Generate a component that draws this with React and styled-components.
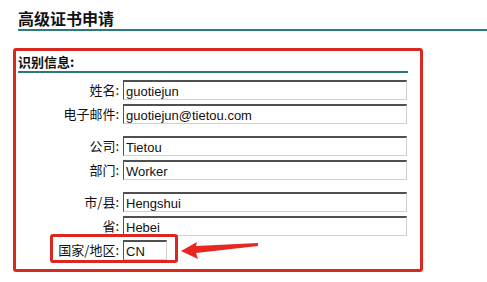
import React from "react";
import styled, { createGlobalStyle } from "styled-components";

const GlobalStyle = createGlobalStyle`
  body {
    margin: 0;
    background: #fff;
    font-family: "Noto Sans CJK SC", "Liberation Sans", sans-serif;
    color: #111;
  }
`;

const Page = styled.div`
  width: 487px;
  height: 282px;
  overflow: hidden;
  padding: 7px 0 0 18px;
  box-sizing: border-box;
`;

const Title = styled.h1`
  margin: 0;
  font-size: 16px;
  line-height: 22px;
  font-weight: 700;
  border-bottom: 2px solid #2b7b7a;
`;

const Panel = styled.div`
  margin: 17px 0 0 -5px;
  width: 410px;
  box-sizing: border-box;
  border: 3px solid #d8281f;
  border-radius: 3px;
  padding: 2px 12px 9px 2px;
`;

const SectionTitle = styled.h2`
  margin: 0 0 7px;
  font-size: 13px;
  line-height: 18px;
  font-weight: 700;
  border-bottom: 2px solid #2b7b7a;
`;

const Fields = styled.div`
  display: grid;
  grid-template-columns: 101px 284px;
  column-gap: 4px;
  row-gap: 4px;
`;

const Row = styled.div`
  display: contents;
`;

const Label = styled.label`
  grid-column: 1;
  text-align: right;
  font-size: 13px;
  line-height: 20px;
  height: 20px;
  margin-top: ${(p) => (p.$spaced ? "8px" : "0")};
`;

const Cell = styled.div`
  grid-column: 2;
  position: relative;
  height: 20px;
  margin-top: ${(p) => (p.$spaced ? "8px" : "0")};
`;

const Input = styled.input`
  display: block;
  width: ${(p) => p.$w || "284px"};
  height: 20px;
  box-sizing: border-box;
  margin: 0;
  padding: 1px 0 0 2px;
  font-family: "Liberation Sans", Arial, sans-serif;
  font-size: 13px;
  color: #111;
  background: #fff;
  border-top: 2px solid #505050;
  border-left: 1px solid #505050;
  border-right: 1px solid #cfcfcf;
  border-bottom: 1px solid #cfcfcf;
  outline: none;
`;

const Highlight = styled.div`
  position: absolute;
  left: -73px;
  top: -6px;
  width: 128px;
  height: 29px;
  box-sizing: border-box;
  border: 3px solid #d8281f;
  border-radius: 3px;
  pointer-events: none;
`;

const Arrow = styled.svg`
  position: absolute;
  left: 57px;
  top: 0;
  width: 80px;
  height: 20px;
`;

const rows = [
  { label: "姓名:", value: "guotiejun" },
  { label: "电子邮件:", value: "guotiejun@tietou.com" },
  { label: "公司:", value: "Tietou", spaced: true },
  { label: "部门:", value: "Worker" },
  { label: "市/县:", value: "Hengshui", spaced: true },
  { label: "省:", value: "Hebei" },
];

export default function App() {
  return (
    <>
      <GlobalStyle />
      <Page>
        <Title>高级证书申请</Title>
        <Panel>
          <SectionTitle>识别信息:</SectionTitle>
          <Fields>
            {rows.map((r) => (
              <Row key={r.label}>
                <Label $spaced={r.spaced}>{r.label}</Label>
                <Cell $spaced={r.spaced}>
                  <Input defaultValue={r.value} />
                </Cell>
              </Row>
            ))}
            <Row>
              <Label>国家/地区:</Label>
              <Cell>
                <Input $w="44px" defaultValue="CN" />
                <Highlight />
                <Arrow viewBox="180 240 80 20">
                  <polygon
                    points="181,251 197,242 196,246 258,243 258,246 196,253 198,259"
                    fill="#e8281e"
                  />
                </Arrow>
              </Cell>
            </Row>
          </Fields>
        </Panel>
      </Page>
    </>
  );
}
